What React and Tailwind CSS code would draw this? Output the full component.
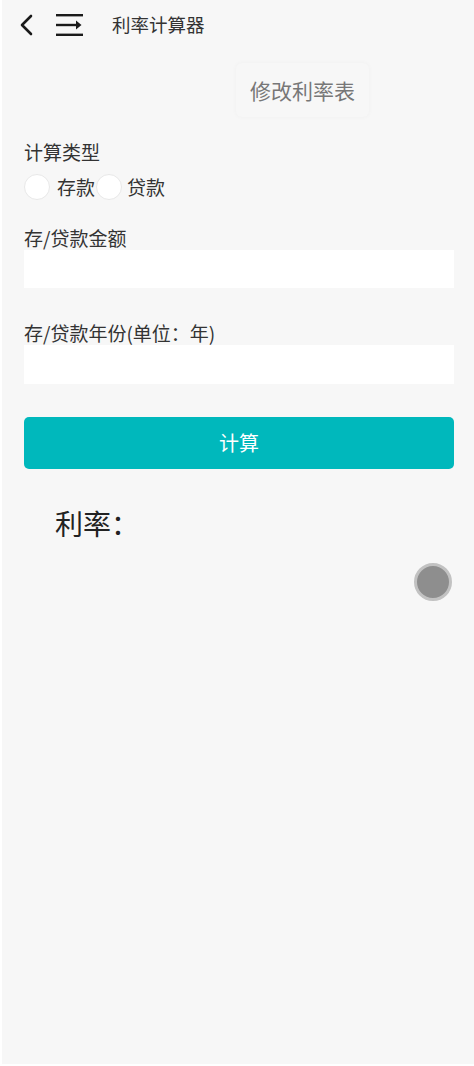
export default function App() {
    const font = { fontFamily: '"Noto Sans CJK SC", "Noto Sans", sans-serif' };

    return (
        <div className="h-[1066px] w-[474px] bg-white" style={font}>
            <div className="ml-[2px] h-[1064px] bg-[#f7f7f7]">
                {/* HEADER */}
                <div className="flex h-[50px] items-center">
                    <svg className="ml-[17px] h-[24px] w-[16px]" viewBox="0 0 16 24" fill="none">
                        <path d="M12 3 L3 12 L12 21" stroke="#1a1a1a" strokeWidth="2.6" strokeLinecap="round" strokeLinejoin="round" />
                    </svg>
                    <svg className="ml-[21px] h-[24px] w-[28px]" viewBox="0 0 28 24" fill="none">
                        <rect x="0" y="1" width="27" height="2.4" fill="#1a1a1a" />
                        <rect x="0" y="10.8" width="20" height="2.4" fill="#1a1a1a" />
                        <path d="M20 7.5 L25.5 12 L20 16.5 Z" fill="#1a1a1a" />
                        <rect x="0" y="20.6" width="27" height="2.4" fill="#1a1a1a" />
                    </svg>
                    <span className="ml-[28px] text-[18.5px] text-[#333]">利率计算器</span>
                </div>

                {/* EDIT RATE TABLE */}
                <div className="flex justify-end pr-[105px] pt-[13px]">
                    <button
                        type="button"
                        className="rounded-md bg-[#f7f7f7] px-[14px] py-[12px] text-[21px] leading-[30px] text-[#777] shadow-[0_0_5px_rgba(0,0,0,0.035)]"
                    >
                        修改利率表
                    </button>
                </div>

                {/* FORM */}
                <div className="px-[22px] pt-[23px]">
                    <p className="text-[19px] leading-[24px] text-[#333]">计算类型</p>
                    <div className="mt-[10px] flex items-center">
                        <span className="h-[26px] w-[26px] rounded-full border border-[#e8e8e8] bg-white" />
                        <span className="ml-[7px] text-[19px] leading-[24px] text-[#333]">存款</span>
                        <span className="ml-[1px] h-[26px] w-[26px] rounded-full border border-[#e8e8e8] bg-white" />
                        <span className="ml-[5px] text-[19px] leading-[24px] text-[#333]">贷款</span>
                    </div>

                    <p className="mt-[26px] text-[19px] leading-[24px] text-[#333]">存/贷款金额</p>
                    <div className="h-[38px] w-[430px] bg-white" />

                    <p className="mt-[33px] text-[19px] leading-[24px] text-[#333]">存/贷款年份(单位：年)</p>
                    <div className="h-[39px] w-[430px] bg-white" />

                    <button
                        type="button"
                        className="mt-[33px] h-[52px] w-[430px] rounded-[5px] bg-[#00b8bc] text-[20px] text-white"
                    >
                        计算
                    </button>

                    <p className="ml-[31px] mt-[34px] text-[28px] leading-[40px] text-[#222]">利率：</p>

                    <div className="mt-[20px] flex justify-end">
                        <span className="h-[38px] w-[38px] rounded-full border-[3px] border-[#c2c2c2] bg-[#8e8e8e]" />
                    </div>
                </div>
            </div>
        </div>
    );
}
